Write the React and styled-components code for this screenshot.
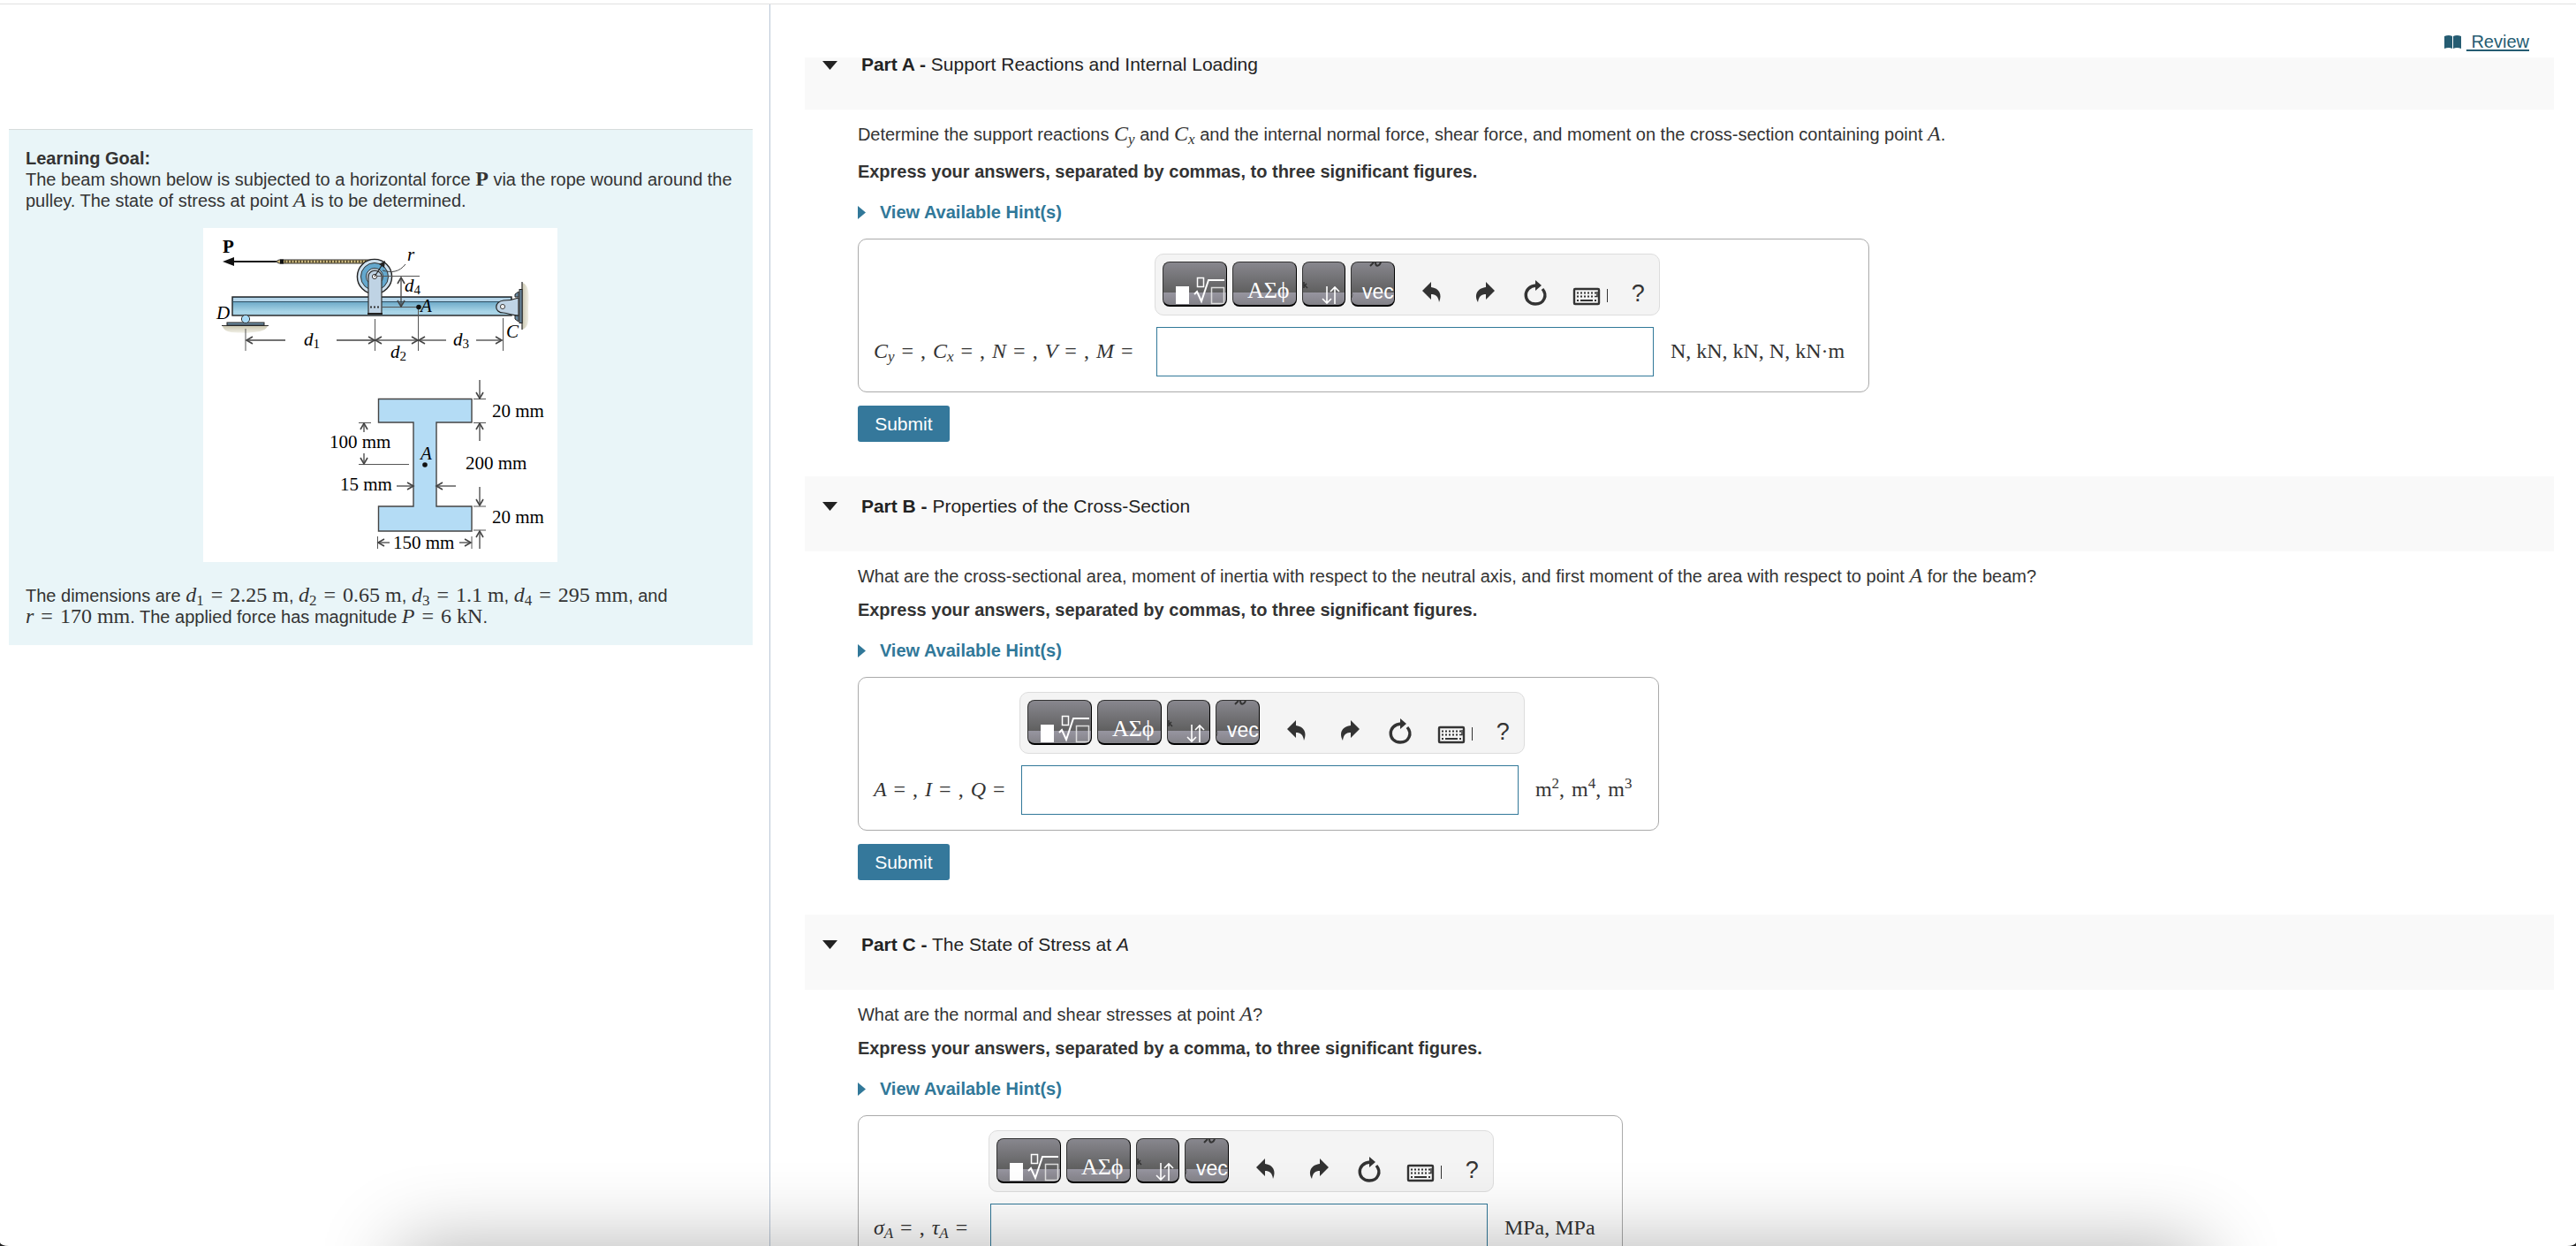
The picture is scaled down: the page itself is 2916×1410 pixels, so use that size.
import styled, { createGlobalStyle } from "styled-components";

const GlobalStyle = createGlobalStyle`
  * {
    box-sizing: border-box;
  }

  body {
    margin: 0;
    background: #fff;
    color: #333;
    font-family: "Liberation Sans", Arial, sans-serif;
    font-size: 20px;
    line-height: 24px;
  }
`;

const StyledPage = styled.div`
  position: relative;
  display: flex;
  flex-direction: column;
  height: 100vh;
  padding-top: 4px;
  overflow: hidden;
`;

const StyledColumns = styled.div`
  display: flex;
  flex: 1;
  min-height: 0;
  border-top: 1px solid #e0e0e0;
`;

const StyledAside = styled.aside`
  flex: 0 0 29.9%;
  padding: 141px 19px 0 10px;
  border-right: 1px solid #b9c6d6;
`;

const StyledMain = styled.main`
  flex: 1;
  min-width: 0;
  display: flex;
  flex-direction: column;
  padding: 0 25px 0 39px;
`;

const StyledTopBar = styled.div`
  display: flex;
  flex: 0 0 60px;
  justify-content: flex-end;
  align-items: flex-start;
  padding: 30px 28px 0 0;
`;

const StyledReview = styled.a`
  display: flex;
  align-items: center;
  gap: 6px;
  color: #255c72;
  text-decoration: none;

  span {
    white-space: pre;
    text-decoration: underline;
    text-underline-offset: 2px;
  }
`;

const StyledParts = styled.div`
  flex: 1;
  min-height: 0;
  overflow: hidden;
`;

const StyledGoal = styled.section`
  padding: 20px 19px;
  border-top: 1px solid #d6dcdc;
  background: #e9f5f8;

  h2,
  p {
    margin: 0;
    font-size: 20px;
    line-height: 24px;
  }
`;

const StyledFigure = styled.svg`
  display: block;
  width: 401px;
  height: 378px;
  margin: 19px auto 26px;
  background: #fff;
  font-family: "Liberation Serif", "Times New Roman", serif;
  font-size: 21px;
`;

const StyledMath = styled.span`
  font-family: "Liberation Serif", "Times New Roman", serif;
  font-size: 24px;
  line-height: 0;
  white-space: nowrap;

  sub,
  sup {
    font-size: 17px;
    line-height: 0;
  }

  sub {
    vertical-align: -4px;
  }
`;

const StyledRelation = styled.span`
  margin: 0 8px;
`;

const StyledComma = styled.span`
  margin-right: 8px;
`;

const StyledPartHeader = styled.header`
  display: flex;
  align-items: flex-start;
  gap: 27px;
  height: ${({ $clipped }) => ($clipped ? "59px" : "85px")};
  padding: ${({ $clipped }) => ($clipped ? "0 20px" : "22px 20px 0")};
  background: #f9f9f9;
  color: #222;

  h3 {
    margin: 0;
    font-size: 21px;
    font-weight: normal;
    line-height: ${({ $clipped }) => ($clipped ? "16px" : "24px")};
  }
`;

const StyledCaret = styled.button`
  width: 17px;
  height: ${({ $clipped }) => ($clipped ? "18px" : "24px")};
  padding: 0;
  border: 0;
  background: none;
  display: flex;
  align-items: center;
`;

const StyledPartBody = styled.div`
  padding: 16px 20px 39px 60px;
`;

const StyledQuestion = styled.p`
  margin: 0 0 14px;
  padding-bottom: ${({ $tall }) => ($tall ? "4px" : "0")};
`;

const StyledInstruction = styled.p`
  margin: 0 0 22px;
  font-weight: bold;
`;

const StyledHint = styled.button`
  display: flex;
  align-items: center;
  gap: 16px;
  margin: 0 0 18px;
  padding: 0;
  border: 0;
  background: none;
  color: #317899;
  font: inherit;
  font-weight: bold;
`;

const StyledAnswer = styled.div`
  display: grid;
  grid-template-columns: ${({ $label, $units }) =>
    `${$label}px 572px ${$units}px`};
  row-gap: 13px;
  align-items: center;
  width: fit-content;
  padding: 16px 24px 17px 17px;
  border: 1px solid #aaa;
  border-radius: 10px;
`;

const StyledToolbar = styled.div`
  grid-row: 1;
  grid-column: 2;
  display: flex;
  gap: 6px;
  height: 70px;
  padding: 8px;
  border: 1px solid #ddd;
  border-radius: 10px;
  background: #f4f4f4;
`;

const StyledLabel = styled.label`
  grid-row: 2;
  grid-column: 1;
`;

const StyledMathButton = styled.button`
  flex: 0 0 ${({ $width }) => $width}px;
  display: flex;
  align-items: flex-end;
  height: 51px;
  padding: 0;
  overflow: hidden;
  border: 1px solid #333;
  border-right-color: #000;
  border-bottom: 2px solid #000;
  border-radius: 8px;
  background: linear-gradient(
    #88878e 0%,
    #606060 70%,
    #9795a0 71%,
    #838288 100%
  );
  color: #fff;

  svg {
    display: block;
    flex: none;
  }
`;

const StyledSymbols = styled.span`
  padding: 0 0 2px 16px;
  font-family: "Liberation Serif", "DejaVu Serif", serif;
  font-size: 26px;
  line-height: 28px;
`;

const StyledTools = styled.div`
  display: flex;
  padding-left: 5px;
`;

const StyledTool = styled.button`
  flex: 0 0 auto;
  height: 51px;
  padding: 0;
  border: 0;
  background: none;
  color: #333;

  svg {
    display: block;
  }
`;

const StyledHelp = styled(StyledTool)`
  width: 45px;
  padding: 20px 0 0 14px;
  font-family: inherit;
  font-size: 27px;
  line-height: 30px;
`;

const StyledInput = styled.input`
  grid-row: 2;
  grid-column: 2;
  width: 563px;
  height: 56px;
  margin: 0 0 0 2px;
  padding: 0 12px;
  border: 1px solid #317899;
  border-radius: 0;
  background: transparent;
  font: inherit;
`;

const StyledUnits = styled.span`
  grid-row: 2;
  grid-column: 3;
  padding-left: 12px;
`;

const StyledSubmit = styled.button`
  display: block;
  width: 104px;
  height: 41px;
  margin-top: 15px;
  padding: 0;
  border: 0;
  border-radius: 3px;
  background: #35789b;
  color: #fff;
  font-family: inherit;
  font-size: 21px;
`;

const StyledDockShadow = styled.div`
  position: absolute;
  top: 100%;
  left: 15.5%;
  right: 14.5%;
  height: 200px;
  box-shadow: 0 0 90px rgba(0, 0, 0, 0.3);
  pointer-events: none;
`;

const StyledCorners = styled.div`
  position: absolute;
  inset: 0;
  border-radius: 0 0 10px 10px / 0 0 4px 4px;
  box-shadow: 0 0 0 12px #222;
  pointer-events: none;
`;

const Eq = () => <StyledRelation>=</StyledRelation>;

const Comma = () => <StyledComma>,</StyledComma>;

function Variable({ name, sub }) {
  return (
    <StyledMath>
      <i>{name}</i>
      {sub && <sub>{sub}</sub>}
    </StyledMath>
  );
}

function Equals({ name, sub, value }) {
  return (
    <StyledMath>
      <i>{name}</i>
      {sub && <sub>{sub}</sub>}
      <Eq />
      {value}
    </StyledMath>
  );
}

function Arrow({ x1, y1, x2, y2 }) {
  return (
    <line
      x1={x1}
      y1={y1}
      x2={x2}
      y2={y2}
      stroke="#444"
      strokeWidth="1.3"
      markerEnd="url(#open-arrow)"
    />
  );
}

function Distance({ x, y, sub }) {
  return (
    <text x={x} y={y} fontStyle="italic">
      d
      <tspan dy="3" fontSize="15" fontStyle="normal">
        {sub}
      </tspan>
    </text>
  );
}

function BeamFigure() {
  return (
    <StyledFigure
      viewBox="0 0 401 378"
      role="img"
      aria-label="Beam with pulley and its cross-section"
    >
      <defs>
        <linearGradient id="beam" x1="0" y1="0" x2="0" y2="1">
          <stop offset="0" stopColor="#4f93b8" />
          <stop offset="0.8" stopColor="#aad6e8" />
          <stop offset="1" stopColor="#a5d0e4" />
        </linearGradient>
        <linearGradient id="ground" x1="0" y1="0" x2="0" y2="1">
          <stop offset="0" stopColor="#cbc7b0" />
          <stop offset="1" stopColor="#f3f2ea" />
        </linearGradient>
        <linearGradient id="wall" x1="0" y1="0" x2="1" y2="0">
          <stop offset="0" stopColor="#cbc7b0" />
          <stop offset="1" stopColor="#f3f2ea" />
        </linearGradient>
        <marker
          id="open-arrow"
          viewBox="0 0 10 10"
          refX="8"
          refY="5"
          markerWidth="10"
          markerHeight="10"
          markerUnits="userSpaceOnUse"
          orient="auto"
        >
          <path d="M1 1 L8 5 L1 9" fill="none" stroke="#444" strokeWidth="1.6" />
        </marker>
      </defs>

      {/* supports */}
      <path d="M22 111 H73 C70 118 60 117 50 119 C38 118 24 120 22 111Z" fill="url(#ground)" />
      <path d="M21 110.500 H74" stroke="#333" strokeWidth="1" />
      <rect x="27" y="107" width="42" height="3" fill="#6d8ca3" stroke="#222" strokeWidth="1" />
      <path d="M361 62 C370 64 369 80 368 90 C368 102 370 112 361 115Z" fill="url(#wall)" />
      <path d="M361 61 V115" stroke="#444" strokeWidth="1.4" />

      {/* beam */}
      <rect x="33" y="78" width="316" height="21" fill="url(#beam)" stroke="#222" strokeWidth="1.4" />
      <rect x="34" y="79" width="314" height="4" fill="#b4d4e8" />
      <path d="M33 83.500 H349" stroke="#2d5166" strokeWidth="1" />
      <circle cx="48" cy="103" r="4.600" fill="#a9dbf7" stroke="#333" />

      {/* pin bracket */}
      <path d="M353 75 l4 -3 v6 h-4Z M353 99 h4 v7 l-4 -3Z" fill="#6d8ca3" stroke="#222" />
      <path d="M357 79 C349 82 345 82 340 82 C329 83 329 96 340 96 C347 97 350 99 357 99Z" fill="#bfd3e4" stroke="#222" strokeWidth="1.2" />
      <circle cx="339" cy="89" r="2.600" fill="#eee" stroke="#444" />
      <rect x="358" y="69.500" width="3" height="38" fill="#6d8ca3" stroke="#222" strokeWidth="1" />

      {/* rope and force */}
      <path d="M33 38 H84" stroke="#111" strokeWidth="2" />
      <path d="M22 38 L35 33 V43Z" fill="#111" />
      <path d="M82 38 L86 36 H190 V40 H86Z" fill="#cfbb80" stroke="#333" />
      <path d="M92 38 H190" stroke="#4a4026" strokeWidth="3" strokeDasharray="1.5 2" />
      <rect x="87" y="35.500" width="4" height="5" fill="#111" />

      {/* pulley */}
      <circle cx="194" cy="55" r="19.600" fill="#cfe1ee" stroke="#222" strokeWidth="1.4" />
      <circle cx="194" cy="55" r="15.500" fill="#64a8cd" stroke="#333" />
      <circle cx="194" cy="55" r="9.500" fill="#cfe1ee" stroke="#333" />
      <circle cx="194" cy="55" r="7" fill="none" stroke="#555" />
      <path d="M187 97 V55 C187 46 202 46 202 55 V97Z" fill="#bfd3e4" stroke="#333" strokeWidth="1.2" />
      <path d="M186 97 H203" stroke="#222" strokeWidth="2" />
      <circle cx="194" cy="55" r="2.600" fill="#fff" stroke="#333" />
      <path d="M189 89.500 H201" stroke="#333" strokeWidth="2" strokeDasharray="2 2" />
      <path d="M194 55 L203 41" stroke="#222" strokeWidth="1.2" />
      <path d="M206 37 L205 45 L199 41Z" fill="#222" />
      <path d="M229 41 C222 50 213 51 203 48" fill="none" stroke="#444" />

      {/* dimension lines */}
      <path d="M196 54.500 H245 M202 89.500 H244" stroke="#555" strokeWidth="1" />
      <path d="M48 114 V139 M194.500 103 V139 M243.500 89 V139 M339.500 102 V139" stroke="#555" strokeWidth="1" fill="none" />
      <Arrow x1="93" y1="127" x2="49" y2="127" />
      <Arrow x1="151" y1="127" x2="194" y2="127" />
      <Arrow x1="215" y1="127" x2="195" y2="127" />
      <Arrow x1="215" y1="127" x2="243" y2="127" />
      <Arrow x1="275" y1="127" x2="244" y2="127" />
      <Arrow x1="309" y1="127" x2="338" y2="127" />
      <Arrow x1="224" y1="72" x2="224" y2="56" />
      <Arrow x1="224" y1="72" x2="224" y2="89" />
      <circle cx="244" cy="89.500" r="2.800" fill="#111" />

      <text x="22" y="28" fontWeight="bold">P</text>
      <g fontStyle="italic">
        <text x="231" y="37">r</text>
        <text x="15" y="103">D</text>
        <text x="343" y="124">C</text>
        <text x="246" y="95">A</text>
      </g>
      <Distance x="114" y="133" sub="1" />
      <Distance x="212" y="147" sub="2" />
      <Distance x="283" y="133" sub="3" />
      <Distance x="228" y="72" sub="4" />

      {/* cross-section */}
      <path
        d="M198.500 193.500 H304 V220 H264 V315 H304 V343 H198.500 V315 H238 V220 H198.500Z"
        fill="#b4dcf5"
        stroke="#444"
        strokeWidth="1.4"
      />
      <path
        d="M306 193.500 H320 M306 220.500 H320 M306 315 H320 M306 342 H320 M176 220.500 H190 M176 267.500 H233 M197.500 349 V363 M304 349 V363"
        stroke="#555"
        strokeWidth="1"
      />
      <Arrow x1="313" y1="172" x2="313" y2="193" />
      <Arrow x1="313" y1="241" x2="313" y2="221" />
      <Arrow x1="313" y1="293" x2="313" y2="314" />
      <Arrow x1="313" y1="363" x2="313" y2="343" />
      <Arrow x1="182" y1="231" x2="182" y2="221" />
      <Arrow x1="182" y1="255" x2="182" y2="267" />
      <Arrow x1="219" y1="292" x2="238" y2="292" />
      <Arrow x1="286" y1="292" x2="264" y2="292" />
      <Arrow x1="211" y1="356" x2="198" y2="356" />
      <Arrow x1="290" y1="356" x2="303" y2="356" />
      <circle cx="251" cy="268" r="2.800" fill="#111" />
      <text x="246" y="262" fontStyle="italic">A</text>
      <text x="327" y="214">20 mm</text>
      <text x="143" y="249">100 mm</text>
      <text x="297" y="273">200 mm</text>
      <text x="155" y="297">15 mm</text>
      <text x="327" y="334">20 mm</text>
      <text x="215" y="363">150 mm</text>
    </StyledFigure>
  );
}

function LearningGoal() {
  return (
    <StyledGoal>
      <h2>Learning Goal:</h2>
      <p>
        The beam shown below is subjected to a horizontal force{" "}
        <StyledMath>
          <b>P</b>
        </StyledMath>{" "}
        via the rope wound around the pulley. The state of stress at point{" "}
        <Variable name="A" /> is to be determined.
      </p>
      <BeamFigure />
      <p>
        The dimensions are <Equals name="d" sub="1" value="2.25 m" />,{" "}
        <Equals name="d" sub="2" value="0.65 m" />,{" "}
        <Equals name="d" sub="3" value="1.1 m" />,{" "}
        <Equals name="d" sub="4" value="295 mm" />, and{" "}
        <Equals name="r" value="170 mm" />. The applied force has magnitude{" "}
        <Equals name="P" value="6 kN" />.
      </p>
    </StyledGoal>
  );
}

function Toolbar() {
  return (
    <StyledToolbar>
      <StyledMathButton $width={73} aria-label="Templates">
        <svg width="71" height="48" fill="none" stroke="#fff">
          <rect x="14" y="27" width="15" height="20" fill="#fff" stroke="none" />
          <rect x="38.500" y="17.500" width="7" height="10" strokeWidth="1.5" />
          <path d="M35 36 L38 33 L43 44 L51 20 H69" strokeWidth="2" />
          <rect x="54.500" y="28.500" width="14" height="18" stroke="#ddd" strokeWidth="1.5" />
        </svg>
      </StyledMathButton>
      <StyledMathButton $width={73} aria-label="Symbols">
        <StyledSymbols>ΑΣϕ</StyledSymbols>
      </StyledMathButton>
      <StyledMathButton $width={49} aria-label="Arrows">
        <svg width="47" height="48" fill="none" stroke="#fff" strokeWidth="1.6">
          <path d="M27 27 V46 M22 41 L27 46 L32 41 M36 47 V28 M31 33 L36 28 L41 33" />
          <path d="M1 22 V29 M4 24 L2 26 L5 29" stroke="#333" />
        </svg>
      </StyledMathButton>
      <StyledMathButton $width={50} aria-label="Vectors">
        <svg width="48" height="48" fontSize="23" fontFamily="Liberation Sans, Arial, sans-serif">
          <path d="M21 4 L25 0 M27 0 C27 5 31 5 33 0" fill="none" stroke="#333" strokeWidth="2" />
          <path d="M0 33 Q2 37 0 40" fill="none" stroke="#555" />
          <text x="12" y="41" fill="#fff">vec</text>
        </svg>
      </StyledMathButton>
      <StyledTools>
        <StyledTool aria-label="Undo">
          <svg width="60" height="51" fill="currentColor">
            <path d="M20 33 L30 23 V29 C39 30 43 37 39 46 C38 39 35 37 30 37 V43Z" />
          </svg>
        </StyledTool>
        <StyledTool aria-label="Redo">
          <svg width="61" height="51" fill="currentColor">
            <path d="M42 33 L32 23 V29 C23 30 18 37 23 46 C24 39 27 37 32 37 V43Z" />
          </svg>
        </StyledTool>
        <StyledTool aria-label="Reset">
          <svg width="56" height="51" fill="none" stroke="currentColor">
            <path d="M35 31 C41 38 37 48 27 48 C13 48 12 28 28 27" strokeWidth="3.400" />
            <path d="M27 21 L34 27 L27 33Z" fill="currentColor" stroke="none" />
          </svg>
        </StyledTool>
        <StyledTool aria-label="Keyboard shortcuts">
          <svg width="58" height="51" fill="none" stroke="currentColor">
            <rect x="15" y="31" width="28" height="17" rx="1" strokeWidth="2.400" />
            <path d="M18 35.500 H40 M18 39.500 H36" strokeWidth="2" strokeDasharray="2 2" />
            <path d="M38 39.500 H41 V34" strokeWidth="1.5" />
            <path d="M18 44 H20 M22 44 H36 M38 44 H40" strokeWidth="2" />
            <path d="M52.500 31 V46" strokeWidth="1" />
          </svg>
        </StyledTool>
        <StyledHelp aria-label="Help">?</StyledHelp>
      </StyledTools>
    </StyledToolbar>
  );
}

function Part({
  id,
  title,
  question,
  instruction,
  label,
  labelWidth,
  units,
  unitsWidth,
  first,
}) {
  return (
    <section>
      <StyledPartHeader $clipped={first}>
        <StyledCaret $clipped={first} aria-label={`Collapse part ${id}`}>
          <svg width="17" height="10" fill="#222">
            <path d="M0 0 H17 L8.500 10Z" />
          </svg>
        </StyledCaret>
        <h3>
          <b>Part {id} -</b> {title}
        </h3>
      </StyledPartHeader>
      <StyledPartBody>
        <StyledQuestion $tall={first}>{question}</StyledQuestion>
        <StyledInstruction>{instruction}</StyledInstruction>
        <StyledHint>
          <svg width="9" height="15" fill="#317899">
            <path d="M0 0 L9 7.500 L0 15Z" />
          </svg>
          View Available Hint(s)
        </StyledHint>
        <StyledAnswer $label={labelWidth} $units={unitsWidth}>
          <Toolbar />
          <StyledLabel htmlFor={`answer-${id}`}>
            <StyledMath>{label}</StyledMath>
          </StyledLabel>
          <StyledInput id={`answer-${id}`} type="text" />
          <StyledUnits>
            <StyledMath>{units}</StyledMath>
          </StyledUnits>
        </StyledAnswer>
        <StyledSubmit>Submit</StyledSubmit>
      </StyledPartBody>
    </section>
  );
}

const parts = [
  {
    id: "A",
    title: "Support Reactions and Internal Loading",
    question: (
      <>
        Determine the support reactions <Variable name="C" sub={<i>y</i>} /> and{" "}
        <Variable name="C" sub={<i>x</i>} /> and the internal normal force,
        shear force, and moment on the cross-section containing point{" "}
        <Variable name="A" />.
      </>
    ),
    instruction:
      "Express your answers, separated by commas, to three significant figures.",
    label: (
      <>
        <Equals name="C" sub={<i>y</i>} />
        <Comma />
        <Equals name="C" sub={<i>x</i>} />
        <Comma />
        <Equals name="N" />
        <Comma />
        <Equals name="V" />
        <Comma />
        <Equals name="M" />
      </>
    ),
    labelWidth: 318,
    units: "N, kN, kN, N, kN·m",
    unitsWidth: 212,
  },
  {
    id: "B",
    title: "Properties of the Cross-Section",
    question: (
      <>
        What are the cross-sectional area, moment of inertia with respect to the
        neutral axis, and first moment of the area with respect to point{" "}
        <Variable name="A" /> for the beam?
      </>
    ),
    instruction:
      "Express your answers, separated by commas, to three significant figures.",
    label: (
      <>
        <Equals name="A" />
        <Comma />
        <Equals name="I" />
        <Comma />
        <Equals name="Q" />
      </>
    ),
    labelWidth: 165,
    units: (
      <>
        m<sup>2</sup>
        <Comma />m<sup>4</sup>
        <Comma />m<sup>3</sup>
      </>
    ),
    unitsWidth: 127,
  },
  {
    id: "C",
    title: (
      <>
        The State of Stress at <i>A</i>
      </>
    ),
    question: (
      <>
        What are the normal and shear stresses at point <Variable name="A" />?
      </>
    ),
    instruction:
      "Express your answers, separated by a comma, to three significant figures.",
    label: (
      <>
        <Equals name="σ" sub={<i>A</i>} />
        <Comma />
        <Equals name="τ" sub={<i>A</i>} />
      </>
    ),
    labelWidth: 130,
    units: "MPa, MPa",
    unitsWidth: 121,
  },
];

export default function App() {
  return (
    <>
      <GlobalStyle />
      <StyledPage>
        <StyledColumns>
          <StyledAside>
            <LearningGoal />
          </StyledAside>
          <StyledMain>
            <StyledTopBar>
              <StyledReview href="#review">
                <svg width="19" height="15" fill="#255c72">
                  <path d="M0 1 Q5 -1 9 1 V15 Q5 13 0 15Z M10 1 Q14 -1 19 1 V15 Q14 13 10 15Z" />
                </svg>
                <span> Review</span>
              </StyledReview>
            </StyledTopBar>
            <StyledParts>
              {parts.map((part, index) => (
                <Part key={part.id} {...part} first={index === 0} />
              ))}
            </StyledParts>
          </StyledMain>
        </StyledColumns>
        <StyledDockShadow />
        <StyledCorners />
      </StyledPage>
    </>
  );
}
